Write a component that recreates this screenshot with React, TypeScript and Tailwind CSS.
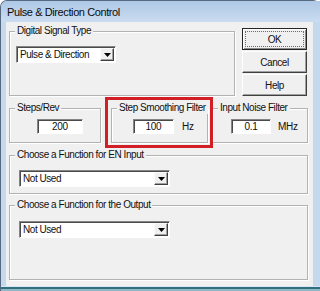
import type { ReactNode } from 'react';

const font = "font-['Liberation_Sans',Arial,sans-serif]";

function Group({ label, className, inner, children }: { label: string; className: string; inner: string; children?: ReactNode }) {
  return (
    <fieldset
      className={`min-w-0 border border-[#b2b2b2] shadow-[inset_1px_1px_0_#ffffff,1px_1px_0_#ffffff] ${className}`}
    >
      <legend className="ml-[5px] px-[2px] whitespace-nowrap text-[10px] leading-[12px] tracking-[-0.45px] bg-[#f0f0f0]">
        {label}
      </legend>
      <div className={inner}>{children}</div>
    </fieldset>
  );
}

function Combo({ text, className }: { text: string; className: string }) {
  return (
    <div
      className={`flex h-[17px] bg-white border border-t-[#858585] border-l-[#858585] border-b-white border-r-white shadow-[inset_1px_1px_0_#4a4a4a] ${className}`}
    >
      <div className="flex-1 pl-[3px] pt-[1px] text-[10px] leading-[14px] tracking-[-0.45px] whitespace-nowrap">
        {text}
      </div>
      <div className="my-[1px] mr-[1px] flex w-[14px] items-center justify-center bg-[#f0f0f0] border border-t-[#fafafa] border-l-[#fafafa] border-b-[#404040] border-r-[#404040] shadow-[inset_-1px_-1px_0_#a0a0a0]">
        <svg width="7" height="4" viewBox="0 0 7 4">
          <polygon points="0,0 7,0 3.5,4" fill="#000" />
        </svg>
      </div>
    </div>
  );
}

function Field({ value, className }: { value: string; className: string }) {
  return (
    <div
      className={`flex h-[15px] items-center justify-center bg-white border border-t-[#858585] border-l-[#858585] border-b-white border-r-white shadow-[inset_1px_1px_0_#4a4a4a] text-[10px] leading-[12px] tracking-[-0.3px] ${className}`}
    >
      {value}
    </div>
  );
}

function Btn({ label, primary }: { label: string; primary?: boolean }) {
  if (primary) {
    return (
      <button className="h-[22px] w-[65px] border border-[#262626] bg-[#f0f0f0] p-[2px] shadow-[inset_1px_1px_0_#ffffff,inset_-1px_-1px_0_#8a8a8a]">
        <span className="flex h-full items-center justify-center border border-dotted border-[#6a6a6a] text-[10px] tracking-[-0.45px]">
          {label}
        </span>
      </button>
    );
  }
  return (
    <button className="flex h-[22px] w-[65px] items-center justify-center bg-[#f0f0f0] border border-t-white border-l-white border-b-[#3f3f3f] border-r-[#3f3f3f] shadow-[inset_-1px_-1px_0_#a0a0a0] text-[10px] tracking-[-0.45px]">
      {label}
    </button>
  );
}

export default function App() {
  return (
    <div className={`relative w-[320px] h-[291px] overflow-hidden bg-white text-[#111] ${font}`}>
      <div className="flex h-full w-full flex-col rounded-t-[7px] border-t border-l border-[#56697e] bg-[#c5d9ee]">
        {/* title bar */}
        <div className="flex h-[21px] items-center pl-[6px] pt-[1px] rounded-tl-[6px] bg-gradient-to-b from-[#aec8e6] to-[#cadcf0] text-[11px] tracking-[-0.4px] text-[#0b0b0b]">
          Pulse &amp; Direction Control
        </div>

        {/* client area */}
        <div className="ml-[5px] mr-[7px] h-[264px] bg-[#f0f0f0] pl-[3px] pt-[3px]">
          <div className="flex items-start">
            <Group label="Digital Signal Type" className="h-[71px] w-[226px]" inner="pl-[6px] pt-[9px]">
              <Combo text="Pulse & Direction" className="w-[100px]" />
            </Group>
            <div className="ml-[7px] mt-[3px] flex flex-col gap-[1px]">
              <Btn label="OK" primary />
              <Btn label="Cancel" />
              <Btn label="Help" />
            </div>
          </div>

          <div className="mt-[6px] flex items-start">
            <Group label="Steps/Rev" className="h-[41px] w-[92px]" inner="pl-[27px] pt-[5px]">
              <Field value="200" className="w-[46px]" />
            </Group>
            <Group label="Step Smoothing Filter" className="ml-[10px] h-[41px] w-[97px]" inner="pl-[21px] pt-[5px]">
              <div className="flex items-center">
                <Field value="100" className="w-[41px]" />
                <span className="ml-[8px] text-[10px] leading-[12px] tracking-[-0.3px]">Hz</span>
              </div>
            </Group>
            <Group label="Input Noise Filter" className="ml-[4px] h-[41px] w-[96px]" inner="pl-[18px] pt-[5px]">
              <div className="flex items-center">
                <Field value="0.1" className="w-[40px]" />
                <span className="ml-[7px] text-[10px] leading-[12px] tracking-[-0.3px]">MHz</span>
              </div>
            </Group>
          </div>

          <Group label="Choose a Function for EN Input" className="mt-[6px] h-[45px] w-[299px]" inner="pl-[9px] pt-[9px]">
            <Combo text="Not Used" className="w-[151px]" />
          </Group>

          <Group label="Choose a Function for the Output" className="mt-[5px] h-[81px] w-[299px]" inner="pl-[9px] pt-[10px]">
            <Combo text="Not Used" className="w-[151px]" />
          </Group>
        </div>

        {/* bottom frame */}
        <div className="flex-1 flex flex-col">
          <div className="h-[1px] bg-[#d9e6f4]" />
          <div className="h-[2px] bg-[#2f6f80]" />
          <div className="flex-1 bg-[#8fb8c4]" />
        </div>
      </div>

      {/* annotation */}
      <div className="absolute left-[105px] top-[97px] h-[51px] w-[108px] border-[3px] border-[#d21f26]" />
    </div>
  );
}
